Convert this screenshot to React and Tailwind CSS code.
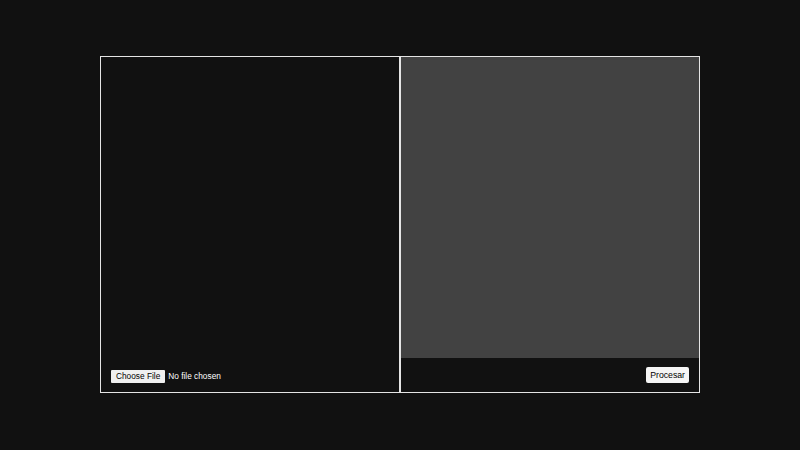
export default function App() {
  return (
    <div className="w-[800px] h-[450px] bg-[#111111] flex items-start justify-center pt-[56px] font-['Liberation_Sans',Arial,sans-serif]">
      <div className="flex w-[600px] h-[337px]">
        {/* Left panel */}
        <div className="w-[300px] h-full border border-[#e5e5e5] flex flex-col justify-end">
          <div className="h-[34px] flex items-center pl-[10px] pt-[2px]">
            <span className="bg-[#f0f0f0] text-black text-[8.3px] leading-none px-[5px] h-[13px] flex items-center rounded-[1px]">
              Choose File
            </span>
            <span className="text-white text-[8.3px] leading-none ml-[3px]">No file chosen</span>
          </div>
        </div>
        {/* Right panel */}
        <div className="w-[300px] h-full border border-[#e5e5e5] flex flex-col">
          <div className="flex-1 bg-[#424242]" />
          <div className="h-[34px] flex items-center justify-end pr-[10px]">
            <button className="bg-[#f5f5f5] text-black text-[8.7px] leading-none px-[4px] h-[16px] rounded-[2px]">
              Procesar
            </button>
          </div>
        </div>
      </div>
    </div>
  )
}
